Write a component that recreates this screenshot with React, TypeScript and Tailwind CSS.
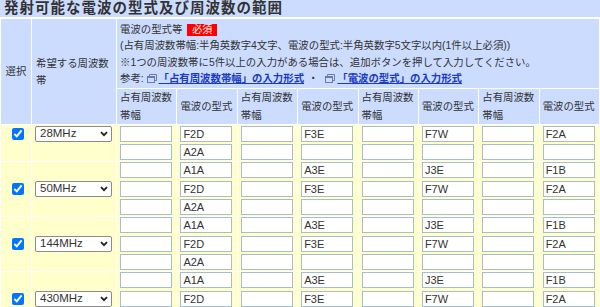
import type { ReactNode } from 'react'

interface Band {
  label: string
  pre: number
  lines: string[][]
}

const BANDS: Band[] = [
  {
    label: '28MHz',
    pre: 0,
    lines: [
      ['F2D', 'F3E', 'F7W', 'F2A'],
      ['A2A', '', '', ''],
    ],
  },
  {
    label: '50MHz',
    pre: 1,
    lines: [
      ['A1A', 'A3E', 'J3E', 'F1B'],
      ['F2D', 'F3E', 'F7W', 'F2A'],
      ['A2A', '', '', ''],
    ],
  },
  {
    label: '144MHz',
    pre: 1,
    lines: [
      ['A1A', 'A3E', 'J3E', 'F1B'],
      ['F2D', 'F3E', 'F7W', 'F2A'],
      ['A2A', '', '', ''],
    ],
  },
  {
    label: '430MHz',
    pre: 1,
    lines: [
      ['A1A', 'A3E', 'J3E', 'F1B'],
      ['F2D', 'F3E', 'F7W', 'F2A'],
      ['A2A', '', '', ''],
    ],
  },
]

const FONT = "font-['Liberation_Sans','Noto_Sans_CJK_JP',sans-serif]"

function WinIcon() {
  return (
    <svg width="10" height="9" viewBox="0 0 10 9" className="inline-block mr-[2px] align-[-1px]">
      <rect x="0.5" y="2.5" width="7" height="6" fill="none" stroke="#6b7bb0" />
      <rect x="0.5" y="2.5" width="7" height="1.5" fill="#6b7bb0" />
      <path d="M2.5 2.5V0.5H9.5V6.5H7.5" fill="none" stroke="#6b7bb0" />
    </svg>
  )
}

function Box({ value }: { value: string }) {
  return (
    <input
      readOnly
      value={value}
      className="block w-[52px] h-[16px] px-[2px] bg-white border border-[#a9bcc9] text-[11px] text-[#333] leading-none outline-none"
    />
  )
}

function SubHead({ children }: { children: ReactNode }) {
  return (
    <div className="bg-[#ccdcff] px-[3px] flex items-center leading-[17.5px]">{children}</div>
  )
}

export default function App() {
  return (
    <div className={`w-[600px] bg-white text-[#333] text-[10.4px] ${FONT}`}>
      <div className="h-[17px] bg-[#ccdcff] px-[4px] leading-[17px] text-[14.5px] tracking-[1px] font-bold">
        発射可能な電波の型式及び周波数の範囲
      </div>
      <div className="grid grid-cols-[30px_84px_repeat(8,minmax(0,1fr))] gap-px px-px pt-[2px] bg-white">
        <div className="row-span-2 bg-[#ccdcff] flex items-center justify-center">選択</div>
        <div className="row-span-2 bg-[#ccdcff] flex items-center px-[4px] leading-[17px]">
          希望する周波数帯
        </div>
        <div className="col-span-8 bg-[#ccdcff] h-[69px] pt-[3px] px-[3px] leading-[16.4px]">
          <div className="flex items-center">
            電波の型式等
            <span className="ml-[5px] h-[12px] px-[5px] bg-[#ff0000] text-white text-[10px] leading-[12px]">
              必須
            </span>
          </div>
          <div>(占有周波数帯幅:半角英数字4文字、電波の型式:半角英数字5文字以内(1件以上必須))</div>
          <div>※1つの周波数帯に5件以上の入力がある場合は、追加ボタンを押して入力してください。</div>
          <div className="whitespace-nowrap">
            参考: <WinIcon />
            <span className="font-bold text-[#1a3bc4] underline">「占有周波数帯幅」の入力形式</span>
            <span className="mx-[4px]">・</span> <WinIcon />
            <span className="font-bold text-[#1a3bc4] underline">「電波の型式」の入力形式</span>
          </div>
        </div>
        {[0, 1, 2, 3].map((i) => [
          <SubHead key={`o${i}`}>占有周波数帯幅</SubHead>,
          <SubHead key={`t${i}`}>電波の型式</SubHead>,
        ])}

        {BANDS.map((b) => {
          const spacers = Array.from({ length: b.pre }, (_, k) => (
            <div key={k} className="h-[16px]" />
          ))
          return [
            <div key={`c${b.label}`} className="bg-[#ffffcc] py-[0.5px] flex flex-col gap-[2.5px]">
              {spacers}
              <div className="h-[16px] flex items-center justify-center pl-[3px]">
                <input type="checkbox" checked readOnly className="w-[12px] h-[12px] m-0" />
              </div>
            </div>,
            <div key={`s${b.label}`} className="bg-[#ffffcc] py-[0.5px] flex flex-col gap-[2.5px] px-[3px]">
              {spacers}
              <div className="relative w-[77px] h-[16px]">
                <select
                  value={b.label}
                  onChange={() => {}}
                  className="appearance-none block w-full h-full pl-[4px] pr-[14px] bg-white border border-[#8a8a8a] rounded-[2px] text-[11.5px] text-[#333] leading-none outline-none"
                >
                  <option>{b.label}</option>
                </select>
                <svg
                  width="8"
                  height="6"
                  viewBox="0 0 8 6"
                  className="absolute right-[4px] top-[5px] pointer-events-none"
                >
                  <path d="M1 1.2L4 4.2L7 1.2" fill="none" stroke="#222" strokeWidth="1.8" />
                </svg>
              </div>
            </div>,
            ...[0, 1, 2, 3].flatMap((p) => [
              <div key={`o${b.label}${p}`} className="bg-[#ffffcc] py-[0.5px] px-[3px] flex flex-col gap-[2.5px]">
                {b.lines.map((_, li) => (
                  <Box key={li} value="" />
                ))}
              </div>,
              <div key={`t${b.label}${p}`} className="bg-[#ffffcc] py-[0.5px] px-[3px] flex flex-col gap-[2.5px]">
                {b.lines.map((ln, li) => (
                  <Box key={li} value={ln[p]} />
                ))}
              </div>,
            ]),
          ]
        })}
      </div>
    </div>
  )
}
